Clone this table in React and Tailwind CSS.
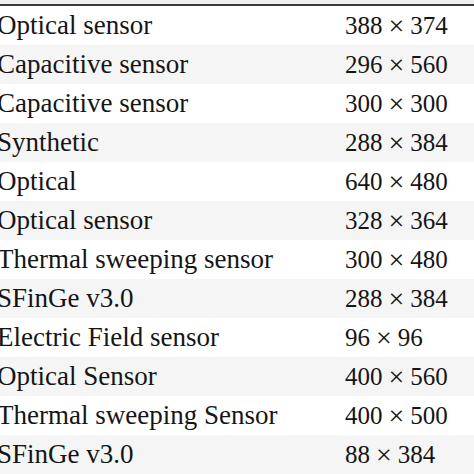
const rows = [
  ["Optical sensor", "388", "374"],
  ["Capacitive sensor", "296", "560"],
  ["Capacitive sensor", "300", "300"],
  ["Synthetic", "288", "384"],
  ["Optical", "640", "480"],
  ["Optical sensor", "328", "364"],
  ["Thermal sweeping sensor", "300", "480"],
  ["SFinGe v3.0", "288", "384"],
  ["Electric Field sensor", "96", "96"],
  ["Optical Sensor", "400", "560"],
  ["Thermal sweeping Sensor", "400", "500"],
  ["SFinGe v3.0", "88", "384"],
];

export default function App() {
  return (
    <div className="w-[474px] h-[474px] overflow-hidden bg-white text-[#151515] font-['Liberation_Serif',serif]">
      <div className="h-[4px] bg-[#efefef]" />
      <div className="h-[2px] bg-[#3a3a3a]" />
      {rows.map(([name, w, h], i) => (
        <div
          key={i}
          className={`flex items-center h-[39px] leading-none ${i % 2 === 1 ? "bg-[#f5f5f5]" : "bg-white"}`}
        >
          <div className="w-[348px] shrink-0 -ml-[3px] text-[27px] whitespace-nowrap">{name}</div>
          <div className="flex items-center whitespace-nowrap text-[25px]">
            {w}
            <span className="mx-[6px] text-[28px] font-light">×</span>
            {h}
          </div>
        </div>
      ))}
    </div>
  );
}
